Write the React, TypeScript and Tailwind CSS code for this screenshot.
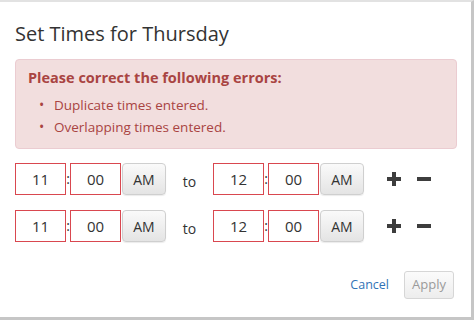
import React from 'react';

const font = { fontFamily: '"Open Sans", "Noto Sans", sans-serif' };

function TimeBox({ value }: { value: string }) {
  return (
    <div className="flex h-[32px] w-[51px] items-center justify-center border border-[#d9474f] bg-white text-[15px] text-[#333]">
      {value}
    </div>
  );
}

function AmButton() {
  return (
    <button className="ml-[1px] flex h-[32px] w-[44px] items-center justify-center rounded-[4px] border border-[#cfcfcf] bg-gradient-to-b from-[#fafafa] to-[#e4e4e4] text-[14px] text-[#333] shadow-[0_1px_1px_rgba(0,0,0,0.08)]">
      AM
    </button>
  );
}

function TimeRow() {
  return (
    <div className="flex items-center">
      <TimeBox value="11" />
      <span className="w-[4px] text-center text-[14px] leading-none text-[#333]">:</span>
      <TimeBox value="00" />
      <AmButton />
      <span className="w-[47px] pt-[4px] text-center text-[14px] text-[#333]">to</span>
      <TimeBox value="12" />
      <span className="w-[4px] text-center text-[14px] leading-none text-[#333]">:</span>
      <TimeBox value="00" />
      <AmButton />
      {/* add / remove */}
      <svg className="ml-[23px]" width="14" height="14" viewBox="0 0 14 14">
        <rect x="5" y="0" width="4" height="14" fill="#3d3d3d" />
        <rect x="0" y="5" width="14" height="4" fill="#3d3d3d" />
      </svg>
      <svg className="ml-[16px]" width="14" height="4" viewBox="0 0 14 4">
        <rect x="0" y="0" width="14" height="4" fill="#3d3d3d" />
      </svg>
    </div>
  );
}

export default function App() {
  return (
    <div className="h-[323px] w-[474px] overflow-hidden bg-white" style={font}>
      <div className="flex h-[320px] w-[474px] flex-col border-t-2 border-r-[3px] border-b-[3px] border-t-[#e2e2e2] border-r-[#c6c6c6] border-b-[#c6c6c6] bg-white px-[15px]">
        <h2 className="mt-[16px] text-[20px] leading-[31px] text-[#333]">Set Times for Thursday</h2>

        {/* Errors */}
        <div className="mt-[10px] w-[442px] rounded-[4px] border border-[#ebccd1] bg-[#f2dede] px-[12px] pt-[8px] pb-[10px] text-[#a94442]">
          <p className="text-[14.5px] font-bold leading-[20px]">Please correct the following errors:</p>
          <ul className="mt-[6px] pl-[11px] text-[13.5px] leading-[22px]">
            <li className="flex items-center">
              <span className="w-[15px] text-[14px]">•</span>
              Duplicate times entered.
            </li>
            <li className="flex items-center">
              <span className="w-[15px] text-[14px]">•</span>
              Overlapping times entered.
            </li>
          </ul>
        </div>

        <div className="mt-[14px] flex flex-col gap-[15px]">
          <TimeRow />
          <TimeRow />
        </div>

        <div className="mt-[29px] flex items-center justify-end pr-[2px]">
          <a className="text-[12.5px] text-[#3173b6]">Cancel</a>
          <button className="ml-[15px] h-[28px] w-[50px] rounded-[3px] border border-[#d6d6d6] bg-gradient-to-b from-[#fbfbfb] to-[#ededed] text-[13px] text-[#9a9a9a]">
            Apply
          </button>
        </div>
      </div>
    </div>
  );
}
